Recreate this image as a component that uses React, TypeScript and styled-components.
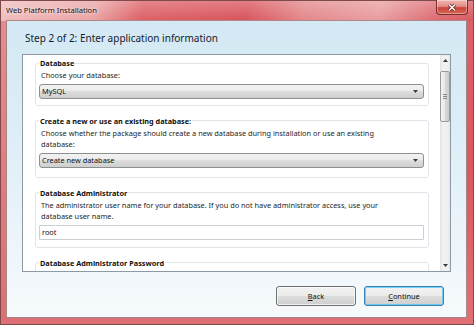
import styled, { createGlobalStyle } from "styled-components";

const GlobalStyle = createGlobalStyle`
    html, body {
        margin: 0;
        padding: 0;
    }

    body {
        font-family: 'Noto Sans', 'DejaVu Sans', sans-serif;
        color: #1a1a1a;
        background: #ffffff;
    }
`

const Window = styled.div`
    box-sizing: border-box;
    display: flex;
    flex-direction: column;

    width: 474px;
    height: 325px;
    padding: 0 6px 6px 5px;

    border: 1px solid #7e4a4a;
    background:
        linear-gradient(180deg, rgba(255, 255, 255, 0.25) 0px, rgba(255, 255, 255, 0) 20px) top / 100% 20px no-repeat,
        linear-gradient(100deg, #f0bcbc 0%, #eaa2a4 20%, #dc5f64 30%, #d8525a 52%, #e38689 64%, #e89c9f 80%, #dd6a70 92%, #d75860 100%) top / 100% 20px no-repeat,
        linear-gradient(180deg, #e68e90 0%, #e07a7e 60%, #dc7074 100%) left / 50% 100% no-repeat,
        linear-gradient(180deg, #dc6268 0%, #d9585e 50%, #e07074 100%) right / 50% 100% no-repeat;
`

const TitleBar = styled.div`
    display: flex;
    align-items: flex-start;
    justify-content: space-between;

    height: 19px;
`

const Title = styled.div`
    padding-top: 4px;

    font-size: 7.6px;
    line-height: 10px;
    color: #111111;
    text-shadow: 0 0 3px rgba(255, 255, 255, 0.9), 0 0 6px rgba(255, 255, 255, 0.6);
`

const CloseButton = styled.div`
    box-sizing: border-box;
    display: flex;
    justify-content: center;
    align-items: center;

    width: 32px;
    height: 15px;
    margin: -1px -1px 0 0;

    border: 1px solid #7a2c2c;
    border-top: none;
    border-radius: 0 0 4px 4px;
    background: linear-gradient(180deg, #f0b8b0 0%, #e48c84 45%, #c9453e 55%, #d9664f 100%);
    box-shadow: inset 0 0 0 1px rgba(255, 255, 255, 0.35);
`

const Client = styled.div`
    flex: 1;
    display: flex;
    flex-direction: column;

    border: 1px solid rgba(125, 62, 62, 0.6);
    background: linear-gradient(180deg, #d4e9f4 0%, #dcedf6 35%, #edf5fa 75%, #f6fafc 100%);
`

const Heading = styled.h1`
    margin: 10px 0 0 18px;

    font-size: 10px;
    font-weight: normal;
    line-height: 14px;
    color: #14202f;
`

const Panel = styled.div`
    box-sizing: border-box;
    display: flex;

    width: 429px;
    height: 218px;
    margin: 9px 0 0 15px;

    border: 1px solid #8c99a6;
    background: #ffffff;
`

const PanelContent = styled.div`
    flex: 1;
    display: flex;
    flex-direction: column;
    gap: 10px;

    padding: 3px 11px 0 12px;
    overflow: hidden;
`

const Group = styled.fieldset<{ $tail: number }>`
    margin: 0;
    min-width: 0;
    padding: 0 4px ${p => p.$tail}px 3px;

    border: 1px solid #dfe5ea;
    border-radius: 3px;
`

const GroupLabel = styled.legend`
    padding: 0 1px;

    font-size: 7.3px;
    font-weight: bold;
    line-height: 10px;
    color: #111111;
`

const Hint = styled.p`
    margin: 2px 0 0 2px;

    font-size: 7.35px;
    line-height: 11.5px;
    color: #1e1e1e;
    white-space: nowrap;
`

const Select = styled.div`
    box-sizing: border-box;
    display: flex;
    align-items: center;
    justify-content: space-between;

    height: 15px;
    margin-top: 2px;
    padding: 0 5px 0 2px;

    border: 1px solid #8e8f8f;
    border-radius: 3px;
    background: linear-gradient(180deg, #f2f2f2 0%, #ebebeb 50%, #dddddd 50%, #cfcfcf 100%);

    font-size: 7.35px;
    color: #111111;
`

const TextField = styled.div`
    box-sizing: border-box;
    display: flex;
    align-items: center;

    height: 15px;
    margin-top: 2px;
    padding: 0 2px;

    border: 1px solid #c9cfd5;
    border-radius: 1px;
    background: #ffffff;

    font-size: 7.35px;
    color: #111111;
`

const ScrollBar = styled.div`
    display: flex;
    flex-direction: column;

    width: 10px;
    background: linear-gradient(90deg, #e4e4e4 0%, #f1f1f1 30%, #f1f1f1 70%, #e8e8e8 100%);
`

const ScrollArrow = styled.div`
    display: flex;
    justify-content: center;
    align-items: center;

    height: 11px;
`

const ScrollThumb = styled.div`
    box-sizing: border-box;
    display: flex;
    justify-content: center;
    align-items: center;

    height: 51px;
    margin-top: 5px;

    border: 1px solid #9a9a9a;
    border-radius: 2px;
    background: linear-gradient(90deg, #f4f4f4 0%, #e7e7e7 50%, #d9d9d9 51%, #cdcdcd 100%);
`

const ScrollGap = styled.div`
    flex: 1;
`

const Footer = styled.div`
    display: flex;
    justify-content: flex-end;
    gap: 8px;

    margin-top: 14px;
    padding-right: 22px;
`

const Button = styled.div<{ $default?: boolean }>`
    box-sizing: border-box;
    display: flex;
    justify-content: center;
    align-items: center;

    width: 80px;
    height: 20px;

    border: 1px solid ${p => p.$default ? '#3c7fb1' : '#707070'};
    border-radius: 3px;
    background: linear-gradient(180deg, #f2f2f2 0%, #ebebeb 50%, #dddddd 50%, #cfcfcf 100%);
    box-shadow: inset 0 0 0 1px ${p => p.$default ? 'rgba(72, 200, 245, 0.75)' : 'rgba(255, 255, 255, 0.7)'};

    font-size: 7.4px;
    color: #111111;
`

const Arrow = ({ down }: { down?: boolean }) =>
    <svg width="5" height="3" viewBox="0 0 5 3">
        <polygon points={ down ? "0,0 5,0 2.5,3" : "0,3 5,3 2.5,0" } fill="#3c3c3c" />
    </svg>

const groups = [
    {
        label: 'Database',
        hint: ['Choose your database:'],
        value: 'MySQL',
        select: true,
        tail: 6
    },
    {
        label: 'Create a new or use an existing database:',
        hint: ['Choose whether the package should create a new database during installation or use an existing', 'database:'],
        value: 'Create new database',
        select: true,
        tail: 9
    },
    {
        label: 'Database Administrator',
        hint: ['The administrator user name for your database. If you do not have administrator access, use your', 'database user name.'],
        value: 'root',
        select: false,
        tail: 7
    }
]

export default function App() {
    return (
        <>
            <GlobalStyle />
            <Window>
                <TitleBar>
                    <Title>Web Platform Installation</Title>
                    <CloseButton>
                        <svg width="10" height="9" viewBox="0 0 10 9">
                            <path d="M2 1.5 L8 7.5 M8 1.5 L2 7.5" stroke="#5a1e1e" strokeWidth="3" />
                            <path d="M2 1.5 L8 7.5 M8 1.5 L2 7.5" stroke="#ffffff" strokeWidth="1.5" />
                        </svg>
                    </CloseButton>
                </TitleBar>

                <Client>
                    <Heading>Step 2 of 2: Enter application information</Heading>

                    <Panel>
                        <PanelContent>
                            {
                                groups.map(group =>
                                    <Group key={ group.label } $tail={ group.tail }>
                                        <GroupLabel>{ group.label }</GroupLabel>
                                        <Hint>{
                                            group.hint.map((line, index) =>
                                                <span key={ index }>{ index > 0 && <br /> }{ line }</span>
                                            )
                                        }</Hint>
                                        {
                                            group.select
                                                ? <Select>{ group.value }<Arrow down /></Select>
                                                : <TextField>{ group.value }</TextField>
                                        }
                                    </Group>
                                )
                            }
                            <Group $tail={ 20 }>
                                <GroupLabel>Database Administrator Password</GroupLabel>
                            </Group>
                        </PanelContent>

                        <ScrollBar>
                            <ScrollArrow><Arrow /></ScrollArrow>
                            <ScrollThumb>
                                <svg width="4" height="5" viewBox="0 0 4 5">
                                    <path d="M0 0.5 H4 M0 2.5 H4 M0 4.5 H4" stroke="#8a8a8a" strokeWidth="1" />
                                </svg>
                            </ScrollThumb>
                            <ScrollGap />
                            <ScrollArrow><Arrow down /></ScrollArrow>
                        </ScrollBar>
                    </Panel>

                    <Footer>
                        <Button><span><u>B</u>ack</span></Button>
                        <Button $default><span><u>C</u>ontinue</span></Button>
                    </Footer>
                </Client>
            </Window>
        </>
    )
}
